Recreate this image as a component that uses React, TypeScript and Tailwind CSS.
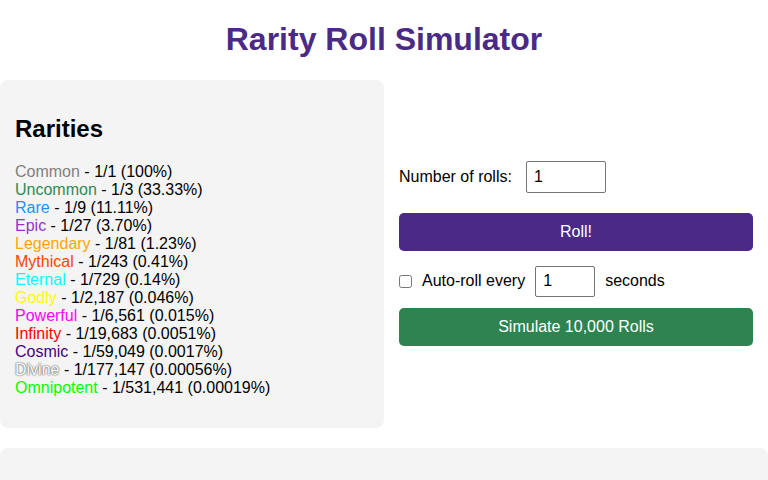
import React from "react";

const rarities: { name: string; cls: string; odds: string }[] = [
  { name: "Common", cls: "text-[#808080]", odds: "1/1 (100%)" },
  { name: "Uncommon", cls: "text-[#2e8b57]", odds: "1/3 (33.33%)" },
  { name: "Rare", cls: "text-[#1e90ff]", odds: "1/9 (11.11%)" },
  { name: "Epic", cls: "text-[#9932cc]", odds: "1/27 (3.70%)" },
  { name: "Legendary", cls: "text-[#ffa500]", odds: "1/81 (1.23%)" },
  { name: "Mythical", cls: "text-[#ff4500]", odds: "1/243 (0.41%)" },
  { name: "Eternal", cls: "text-[#00ffff]", odds: "1/729 (0.14%)" },
  { name: "Godly", cls: "text-[#ffff00]", odds: "1/2,187 (0.046%)" },
  { name: "Powerful", cls: "text-[#ff00ff]", odds: "1/6,561 (0.015%)" },
  { name: "Infinity", cls: "text-[#ff0000]", odds: "1/19,683 (0.0051%)" },
  { name: "Cosmic", cls: "text-[#4b0082]", odds: "1/59,049 (0.0017%)" },
  {
    name: "Divine",
    cls: "text-white [text-shadow:0_0_2px_#555,0_0_1px_#555]",
    odds: "1/177,147 (0.00056%)",
  },
  { name: "Omnipotent", cls: "text-[#00ff00]", odds: "1/531,441 (0.00019%)" },
];

export default function App() {
  return (
    <div className="min-h-[480px] bg-white text-black font-['Liberation_Sans',Arial,sans-serif] text-[16px] leading-[18px]">
      <h1 className="pt-[21px] pb-[22px] text-center text-[32px] leading-[37px] font-bold text-[#4b2a85]">
        Rarity Roll Simulator
      </h1>
      <div className="grid grid-cols-2">
        <div className="bg-[#f4f4f4] rounded-lg px-[15px] pt-[35px] pb-[31px]">
          <h2 className="text-[24px] leading-[28px] font-bold mb-[20px]">Rarities</h2>
          <div className="flex flex-col">
            {rarities.map((r) => (
              <div key={r.name} className="h-[18px] whitespace-nowrap">
                <span className={r.cls}>{r.name}</span> - {r.odds}
              </div>
            ))}
          </div>
        </div>
        <div className="px-[15px] flex flex-col justify-center">
          <div className="flex items-center">
            <span>Number of rolls:</span>
            <input
              type="text"
              defaultValue="1"
              className="ml-[14px] w-[80px] h-[32px] border border-[#767676] rounded-[2px] px-[7px] bg-white text-[16px] outline-none"
            />
          </div>
          <button className="mt-[20px] h-[38px] w-full rounded-[5px] bg-[#4b2a85] text-white text-[16px]">
            Roll!
          </button>
          <div className="mt-[15px] flex items-center h-[31px]">
            <input type="checkbox" className="w-[13px] h-[13px] mr-[10px]" />
            <span>Auto-roll every</span>
            <input
              type="text"
              defaultValue="1"
              className="ml-[10px] w-[60px] h-[31px] border border-[#767676] rounded-[2px] px-[7px] bg-white text-[16px] outline-none"
            />
            <span className="ml-[10px]">seconds</span>
          </div>
          <button className="mt-[11px] mb-[2px] h-[38px] w-full rounded-[5px] bg-[#2e8350] text-white text-[16px]">
            Simulate 10,000 Rolls
          </button>
        </div>
      </div>
      <div className="mt-[20px] bg-[#f4f4f4] rounded-lg h-[60px]"></div>
    </div>
  );
}
